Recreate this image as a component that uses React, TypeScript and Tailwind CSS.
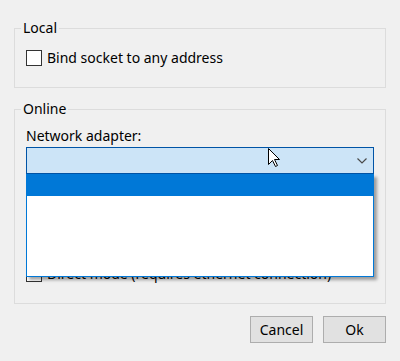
import React from "react";

const font = { fontFamily: '"Noto Sans", "Segoe UI", sans-serif' };

function Checkbox() {
  return <span className="inline-block w-[16px] h-[16px] border border-[#333333] bg-white shrink-0" />;
}

export default function App() {
  return (
    <div
      className="w-[400px] h-[361px] bg-[#f0f0f0] relative overflow-hidden text-[14px] leading-[20px] text-black flex flex-col px-[14px]"
      style={font}
    >
      <fieldset className="mt-[18px] border border-[#dcdcdc] pl-[11px] pr-[11px] pb-[19px]">
        <legend className="ml-[-5px] px-[2px] leading-[20px]">Local</legend>
        <label className="mt-[10px] flex items-center gap-[5px] h-[20px]">
          <Checkbox />
          <span>Bind socket to any address</span>
        </label>
      </fieldset>

      <fieldset className="mt-[11px] border border-[#dcdcdc] pl-[11px] pr-[11px] pb-[19px]">
        <legend className="ml-[-5px] px-[2px] leading-[20px]">Online</legend>
        <div className="mt-[7px] h-[20px]">Network adapter:</div>
        <div className="relative mt-[1px]">
          <div className="h-[27px] border border-[#0054a6] bg-[#cce4f7] flex items-center justify-end pr-[6px]">
            <svg width="10" height="6" viewBox="0 0 10 6" className="block">
              <polyline points="0.5,0.5 5,5 9.5,0.5" fill="none" stroke="#4a4a4a" strokeWidth="1.2" />
            </svg>
          </div>
          <div className="absolute left-0 right-0 top-full z-10 h-[103px] border border-[#0078d7] bg-white shadow-[3px_3px_3px_rgba(0,0,0,0.35)]">
            <div className="h-[21px] bg-[#0078d7]" />
          </div>
        </div>
        <label className="mt-[90px] flex items-center gap-[5px] h-[20px]">
          <Checkbox />
          <span>Direct mode (requires ethernet connection)</span>
        </label>
      </fieldset>

      <div className="mt-[12px] flex justify-end gap-[10px]">
        <button className="w-[63px] h-[27px] bg-[#e1e1e1] border border-[#adadad] text-[14px] leading-[20px]" style={font}>
          Cancel
        </button>
        <button className="w-[63px] h-[27px] bg-[#e1e1e1] border border-[#adadad] text-[14px] leading-[20px]" style={font}>
          Ok
        </button>
      </div>

      <svg
        className="absolute left-[268px] top-[148px] z-20"
        width="13"
        height="20"
        viewBox="0 0 13 20"
      >
        <path d="M0.5,0.5 L0.5,16.5 L4.5,12.5 L7.5,18.5 L9.5,17.5 L6.5,11.5 L11.5,11.5 Z" fill="white" stroke="black" strokeWidth="1" strokeLinejoin="miter" />
      </svg>
    </div>
  );
}
